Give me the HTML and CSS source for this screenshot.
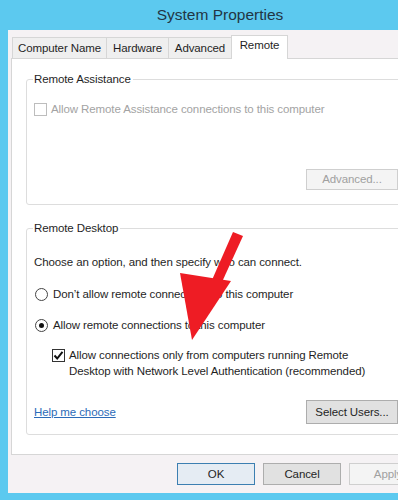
FILE: index.html
```html
<!DOCTYPE html>
<html>
<head>
<meta charset="utf-8">
<link rel="stylesheet" href="styles.css">
</head>
<body>
<div class="window">
  <div class="titlebar">System Properties</div>
  <div class="dialog">
    <div class="tabs">
      <div class="tab t1">Computer Name</div>
      <div class="tab t2">Hardware</div>
      <div class="tab t3">Advanced</div>
      <div class="tab t4 selected">Remote</div>
    </div>
    <div class="panel">
      <fieldset class="group ra">
        <legend>Remote Assistance</legend>
        <div class="check-row disabled">
          <span class="box"></span>
          <span>Allow Remote Assistance connections to this computer</span>
        </div>
        <div class="btn-row ra-btns">
          <div class="btn disabled adv">Advanced...</div>
        </div>
      </fieldset>
      <fieldset class="group rd">
        <legend>Remote Desktop</legend>
        <div class="intro">Choose an option, and then specify who can connect.</div>
        <div class="radio-row r1">
          <span class="radio"></span>
          <span>Don’t allow remote connections to this computer</span>
        </div>
        <div class="radio-row r2">
          <span class="radio on"><span class="dot"></span></span>
          <span>Allow remote connections to this computer</span>
        </div>
        <div class="nla-row">
          <span class="box checked">
            <svg width="11" height="11" viewBox="0 0 11 11"><path d="M1.5 5.5 L4.2 8.5 L9.5 1.8" fill="none" stroke="#111" stroke-width="2"/></svg>
          </span>
          <span class="nla-text">Allow connections only from computers running Remote<br>Desktop with Network Level Authentication (recommended)</span>
        </div>
        <div class="help-row">
          <span class="link">Help me choose</span>
          <div class="btn users">Select Users...</div>
        </div>
      </fieldset>
    </div>
    <div class="footer">
      <div class="btn fbtn default">OK</div>
      <div class="btn fbtn">Cancel</div>
      <div class="btn fbtn disabled">Apply</div>
    </div>
  </div>
</div>
<svg class="arrow" width="398" height="500" viewBox="0 0 398 500">
  <polygon points="233,232 243,236 222,282 212,280" fill="#ee1c24"/>
  <polygon points="180,273 231,281 192,340" fill="#ee1c24"/>
</svg>
</body>
</html>
```

FILE: styles.css
```css
html, body {
  margin: 0;
  padding: 0;
}
body {
  width: 398px;
  height: 500px;
  overflow: hidden;
  background: #5cc9ef;
  font-family: "Liberation Sans", Arial, sans-serif;
  font-size: 11.5px;
  letter-spacing: -0.1px;
  color: #1f1f1f;
  position: relative;
}
.window {
  width: 440px;
  height: 500px;
  background: #5cc9ef;
}
.titlebar {
  height: 30px;
  line-height: 29px;
  text-align: center;
  font-size: 15.5px;
  letter-spacing: 0;
  color: #223544;
}
.dialog {
  margin-left: 8px;
  width: 424px;
  height: 463px;
  background: #f5f2f4;
  box-sizing: border-box;
  padding-top: 5px;
}
.tabs {
  display: flex;
  align-items: flex-end;
  margin-left: 4px;
  height: 24px;
  position: relative;
  z-index: 2;
  margin-bottom: -1px;
}
.tab {
  box-sizing: border-box;
  height: 21px;
  border: 1px solid #d6d6d6;
  border-bottom: none;
  background: #efefef;
  text-align: center;
  line-height: 20px;
  margin-bottom: 1px;
}
.tab + .tab { margin-left: -1px; }
.t1 { width: 95px; }
.t2 { width: 63px; }
.t3 { width: 64px; }
.t4 { width: 57px; }
.tab.selected {
  height: 24px;
  background: #ffffff;
  margin-bottom: 0;
  line-height: 19px;
}
.panel {
  margin-left: 3px;
  width: 415px;
  height: 397px;
  box-sizing: border-box;
  border: 1px solid #d6d6d6;
  background: #ffffff;
  padding-top: 12px;
}
.group {
  margin: 0 0 0 14px;
  padding: 0;
  width: 386px;
  box-sizing: border-box;
  border: 1px solid #dddddd;
  border-radius: 3px;
  min-width: 0;
}
.group legend {
  margin-left: 6px;
  padding: 0 2px 0 1px;
  line-height: 16px;
}
.check-row, .radio-row {
  display: flex;
  align-items: center;
  height: 16px;
  line-height: 16px;
}
.ra .check-row {
  margin: 14px 0 0 7px;
}
.disabled { color: #a3a3a3; }
.box {
  width: 13px;
  height: 13px;
  box-sizing: border-box;
  border: 1px solid #333;
  background: #fff;
  margin-right: 4px;
  display: flex;
  align-items: center;
  justify-content: center;
  flex: none;
}
.check-row.disabled .box { border-color: #bdbdbd; }
.ra-btns {
  margin: 52px 0 14px 279px;
  display: flex;
}
.btn {
  box-sizing: border-box;
  height: 23px;
  border: 1px solid #adadad;
  background: #e1e1e1;
  text-align: center;
  line-height: 21px;
  color: #1f1f1f;
}
.btn.disabled {
  background: #f4f4f4;
  border-color: #cfcfcf;
  color: #a0a0a0;
}
.adv { width: 92px; height: 21px; line-height: 19px; }
.rd { margin-top: 15px; }
.intro {
  margin: 18px 0 0 7px;
  line-height: 16px;
}
.radio-row { margin-left: 8px; }
.r1 { margin-top: 16px; }
.r2 { margin-top: 15px; }
.radio {
  width: 13px;
  height: 13px;
  box-sizing: border-box;
  border: 1px solid #444;
  border-radius: 50%;
  background: #fff;
  margin-right: 5px;
  display: flex;
  align-items: center;
  justify-content: center;
  flex: none;
}
.dot {
  width: 5px;
  height: 5px;
  border-radius: 50%;
  background: #111;
}
.nla-row {
  display: flex;
  align-items: flex-start;
  margin: 14px 0 0 25px;
  line-height: 16px;
}
.nla-row .box { margin-top: 2px; margin-right: 4px; }
.help-row {
  display: flex;
  align-items: center;
  margin: 21px 0 10px 7px;
  height: 24px;
}
.link {
  color: #2c6bb8;
  text-decoration: underline;
}
.users {
  margin-left: auto;
  margin-right: 13px;
  width: 92px;
  height: 24px;
  line-height: 22px;
}
.footer {
  display: flex;
  gap: 8px;
  margin: 8px 0 0 169px;
}
.fbtn {
  width: 78px;
  height: 22px;
  line-height: 20px;
}
.fbtn.default {
  border-color: #3c7fb1;
  background: #e5ecf3;
}
.arrow {
  position: absolute;
  left: 0;
  top: 0;
  pointer-events: none;
}
```
